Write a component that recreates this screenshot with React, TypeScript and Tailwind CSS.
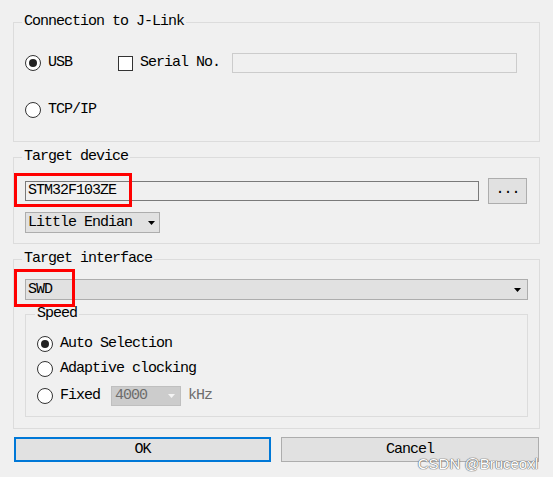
import React from 'react'

const font = "font-['Liberation_Mono','DejaVu_Sans_Mono',monospace] text-[15px] tracking-[-1px] leading-4"

function Radio({ checked, label }: { checked?: boolean; label: string }) {
  return (
    <div className="flex items-center h-5">
      <div className="w-4 h-4 rounded-full border border-[#333333] bg-white flex items-center justify-center">
        {checked && <div className="w-2 h-2 rounded-full bg-[#222222]" />}
      </div>
      <span className="ml-[7px]">{label}</span>
    </div>
  )
}

function Arrow({ color = '#000000' }: { color?: string }) {
  return (
    <svg width="7" height="4" viewBox="0 0 7 4">
      <path d="M0 0H7L3.5 4Z" fill={color} />
    </svg>
  )
}

function Group({ title, className, children }: { title: string; className?: string; children: React.ReactNode }) {
  return (
    <fieldset className={'border border-[#dcdcdc] pl-[11px] ' + (className || '')}>
      <legend className="px-[2px] -ml-[3px] h-4 leading-4">{title}</legend>
      {children}
    </fieldset>
  )
}

export default function App() {
  return (
    <div className={`relative w-[553px] h-[477px] bg-[#f0f0f0] text-black px-[13px] pt-[14px] overflow-hidden ${font}`}>
      {/* Connection */}
      <Group title="Connection to J-Link" className="pt-[23px] pb-[21px]">
        <div className="flex items-center h-5">
          <Radio checked label="USB" />
          <div className="ml-[46px] w-[15px] h-[15px] border border-[#333333] bg-white" />
          <span className="ml-[7px]">Serial No.</span>
          <div className="ml-[12px] w-[285px] h-5 border border-[#cccccc] bg-[#f0f0f0]" />
        </div>
        <div className="mt-[27px]">
          <Radio label="TCP/IP" />
        </div>
      </Group>

      {/* Target device */}
      <Group title="Target device" className="mt-[7px] pt-[13px] pb-[10px]">
        <div className="flex items-center h-[26px]">
          <div className="relative w-[454px] h-5 border border-[#7a7a7a] bg-[#f0f0f0] flex items-center pl-[2px]">
            STM32F103ZE
            <div className="absolute -left-[12px] -top-[9px] w-[118px] h-[34px] border-[3px] border-[#ff0000]" />
          </div>
          <div className="ml-[9px] w-[39px] h-[26px] border border-[#adadad] bg-[#e1e1e1] flex items-center justify-center pb-[2px]">
            ...
          </div>
        </div>
        <div className="mt-[8px] w-[135px] h-[21px] border border-[#adadad] bg-[#e1e1e1] flex items-center justify-between pl-[2px] pr-[4px]">
          <span>Little Endian</span>
          <Arrow />
        </div>
      </Group>

      {/* Target interface */}
      <Group title="Target interface" className="mt-[7px] pt-[12px] pb-[11px] pr-[11px]">
        <div className="relative w-[503px] h-[21px] border border-[#adadad] bg-[#e1e1e1] flex items-center justify-between pl-[2px] pr-[6px]">
          <span>SWD</span>
          <Arrow />
          <div className="absolute -left-[12px] -top-[11px] w-[61px] h-[38px] border-[3px] border-[#ff0000]" />
        </div>
        <fieldset className="mt-[6px] w-[503px] border border-[#dcdcdc] pl-[11px] pt-[12px] pb-[10px]">
          <legend className="px-[2px] -ml-[2px] h-4 leading-4">Speed</legend>
          <Radio checked label="Auto Selection" />
          <div className="mt-[5px]">
            <Radio label="Adaptive clocking" />
          </div>
          <div className="mt-[7px] flex items-center h-5">
            <Radio label="Fixed" />
            <div className="ml-[11px] w-[70px] h-5 border border-[#bfbfbf] bg-[#cccccc] flex items-center justify-between pl-[3px] pr-[5px] text-[#6d6d6d]">
              <span>4000</span>
              <Arrow color="#f4f4f4" />
            </div>
            <span className="ml-[7px] text-[#6d6d6d]">kHz</span>
          </div>
        </fieldset>
      </Group>

      {/* Buttons */}
      <div className="mt-[8px] flex">
        <div className="ml-[1px] w-[257px] h-[25px] border-2 border-[#0078d7] bg-[#e1e1e1] flex items-center justify-center">
          OK
        </div>
        <div className="ml-[10px] w-[258px] h-[25px] border border-[#adadad] bg-[#e1e1e1] flex items-center justify-center">
          Cancel
        </div>
      </div>

      <div className="absolute right-[15px] bottom-[5px] font-['Liberation_Sans',Arial,sans-serif] text-[15px] tracking-normal text-white [text-shadow:0_0_1px_#666,0_0_1px_#666,0_0_1px_#666]">
        CSDN @Bruceoxl
      </div>
    </div>
  )
}
